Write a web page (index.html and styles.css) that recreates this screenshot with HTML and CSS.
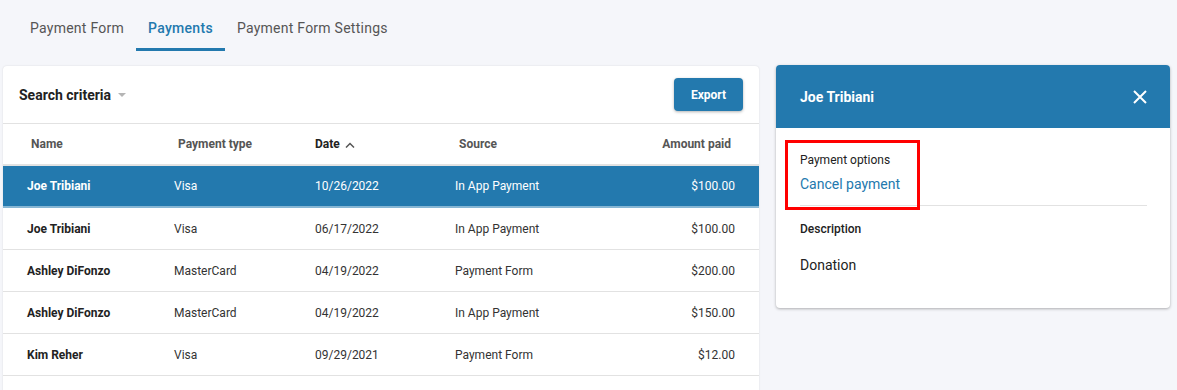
FILE: index.html
```html
<!DOCTYPE html>
<html>
<head>
<meta charset="utf-8">
<link rel="stylesheet" href="styles.css">
</head>
<body>
<nav class="tabs">
  <div class="tab">Payment Form</div>
  <div class="tab active">Payments</div>
  <div class="tab">Payment Form Settings</div>
</nav>
<main class="content">
  <section class="card">
    <div class="card-head">
      <div class="criteria">Search criteria <span class="caret"></span></div>
      <button class="export">Export</button>
    </div>
    <div class="thead">
      <div class="th">Name</div>
      <div class="th">Payment type</div>
      <div class="th date">Date <svg class="sort" width="10" height="6" viewBox="0 0 10 6"><path d="M1 5.5 L5 1.5 L9 5.5" fill="none" stroke="#555" stroke-width="1.5"/></svg></div>
      <div class="th">Source</div>
      <div class="th right">Amount paid</div>
    </div>
    <div class="row selected">
      <div class="name">Joe Tribiani</div><div>Visa</div><div>10/26/2022</div><div>In App Payment</div><div class="right">$100.00</div>
    </div>
    <div class="row">
      <div class="name">Joe Tribiani</div><div>Visa</div><div>06/17/2022</div><div>In App Payment</div><div class="right">$100.00</div>
    </div>
    <div class="row">
      <div class="name">Ashley DiFonzo</div><div>MasterCard</div><div>04/19/2022</div><div>Payment Form</div><div class="right">$200.00</div>
    </div>
    <div class="row">
      <div class="name">Ashley DiFonzo</div><div>MasterCard</div><div>04/19/2022</div><div>In App Payment</div><div class="right">$150.00</div>
    </div>
    <div class="row">
      <div class="name">Kim Reher</div><div>Visa</div><div>09/29/2021</div><div>Payment Form</div><div class="right">$12.00</div>
    </div>
    <div class="row last"></div>
  </section>
  <aside class="panel">
    <div class="panel-head">
      <div class="panel-title">Joe Tribiani</div>
      <svg class="close" width="14" height="14" viewBox="0 0 14 14"><path d="M1 1 L13 13 M13 1 L1 13" stroke="#fff" stroke-width="2"/></svg>
    </div>
    <div class="panel-body">
      <div class="highlight"></div>
      <div class="opt-label">Payment options</div>
      <div class="cancel">Cancel payment</div>
      <div class="divider"></div>
      <div class="desc-label">Description</div>
      <div class="desc">Donation</div>
    </div>
  </aside>
</main>
</body>
</html>
```

FILE: styles.css
```css
* { box-sizing: border-box; }
body {
  margin: 0;
  background: #f5f6fa;
  font-family: Roboto, "Liberation Sans", sans-serif;
  color: #222;
  width: 1177px;
  height: 390px;
  overflow: hidden;
}
.tabs {
  display: flex;
  padding-left: 18px;
  height: 52px;
}
.tab {
  padding: 18px 12px 0;
  font-size: 14px;
  line-height: 20px;
  color: #555;
  letter-spacing: 0.25px;
  border-bottom: 3px solid transparent;
  height: 51px;
}
.tab.active {
  color: #2379ae;
  border-bottom-color: #2379ae;
  font-weight: 500;
  letter-spacing: 0.3px;
}
.content {
  display: flex;
  align-items: flex-start;
  padding-left: 3px;
  gap: 17px;
  margin-top: 13px;
}
.card {
  width: 756px;
  height: 330px;
  background: #fff;
  border-radius: 4px 4px 0 0;
  box-shadow: 0 0 2px rgba(0,0,0,0.12);
  margin-top: 1px;
  overflow: hidden;
}
.card-head {
  height: 58px;
  border-bottom: 1px solid #e2e2e2;
  display: flex;
  align-items: center;
  justify-content: space-between;
  padding: 0 16px 0 16px;
}
.criteria {
  font-size: 14px;
  font-weight: 700;
  color: #222;
  display: flex;
  align-items: center;
  gap: 7px;
}
.caret {
  width: 0; height: 0;
  border-left: 4px solid transparent;
  border-right: 4px solid transparent;
  border-top: 4px solid #b5b5b5;
}
.export {
  width: 69px;
  height: 33px;
  background: #2379ae;
  color: #fff;
  border: 0;
  border-radius: 4px;
  font-family: Roboto, "Liberation Sans", sans-serif;
  font-size: 12px;
  font-weight: 700;
  box-shadow: 0 1px 3px rgba(0,0,0,0.3);
}
.thead, .row {
  display: grid;
  grid-template-columns: 147px 141px 140px 1fr 120px;
  align-items: center;
  padding: 0 24px;
  font-size: 12px;
}
.thead {
  height: 42px;
  border-bottom: 2px solid #e2e2e2;
}
.th {
  padding: 0 4px;
  font-weight: 700;
  color: #555;
}
.th.date {
  padding: 0;
  color: #222;
  display: flex;
  align-items: center;
  gap: 5px;
}
.sort { margin-top: 1px; }
.right { text-align: right; }
.row {
  height: 42px;
  border-bottom: 1px solid #e2e2e2;
  color: #333;
}
.row .name { font-weight: 700; color: #222; }
.row.selected {
  background: #2379ae;
  color: #fff;
  border-bottom: 2px solid #86b6d4;
}
.row.selected .name { color: #fff; }
.panel {
  width: 394px;
  background: #fff;
  border-radius: 4px;
  box-shadow: 0 1px 3px rgba(0,0,0,0.3);
  overflow: hidden;
}
.panel-head {
  height: 63px;
  background: #2379ae;
  display: flex;
  align-items: center;
  justify-content: space-between;
  padding: 0 23px 0 24px;
}
.panel-title {
  color: #fff;
  font-size: 14px;
  font-weight: 700;
}
.panel-body {
  position: relative;
  padding: 24px 23px 33px 24px;
}
.highlight {
  position: absolute;
  left: 9px;
  top: 12px;
  width: 135px;
  height: 70px;
  border: 3px solid #ff0000;
}
.opt-label {
  font-size: 12px;
  line-height: 16px;
  color: #222;
}
.cancel {
  font-size: 14px;
  line-height: 18px;
  color: #2379ae;
  margin-top: 7px;
}
.divider {
  height: 1px;
  background: #e2e2e2;
  margin-top: 12px;
}
.desc-label {
  font-size: 12px;
  font-weight: 500;
  line-height: 16px;
  margin-top: 15px;
}
.desc {
  font-size: 14px;
  line-height: 20px;
  margin-top: 18px;
}
```
